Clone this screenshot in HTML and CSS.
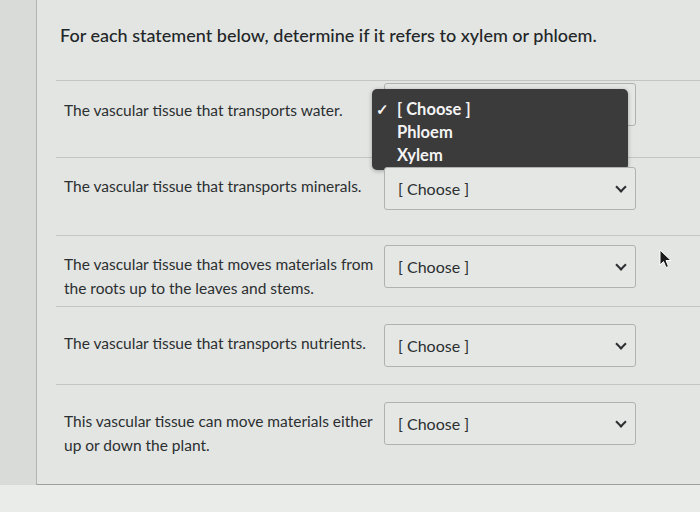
FILE: index.html
```html
<!DOCTYPE html>
<html lang="en">
<head>
    <meta charset="UTF-8">
    <meta name="viewport" content="width=device-width, initial-scale=1.0">
    <title>Quiz</title>
    <link rel="stylesheet" href="styles.css">
</head>
<body>
    <div class="page">
        <div class="card">
            <div class="title">For each statement below, determine if it refers to xylem or phloem.</div>

            <div class="questions">
                <div class="row">
                    <div class="statement">The vascular tissue that transports water.</div>
                    <div class="select-wrap open">
                        <div class="select"><span class="value">[ Choose ]</span><span class="chevron"></span></div>
                        <div class="menu">
                            <div class="option"><span class="check">&#10003;</span>[ Choose ]</div>
                            <div class="option">Phloem</div>
                            <div class="option">Xylem</div>
                        </div>
                    </div>
                </div>
                <div class="row">
                    <div class="statement">The vascular tissue that transports minerals.</div>
                    <div class="select-wrap">
                        <div class="select"><span class="value">[ Choose ]</span><span class="chevron"></span></div>
                    </div>
                </div>
                <div class="row short">
                    <div class="statement">The vascular tissue that moves materials from the roots up to the leaves and stems.</div>
                    <div class="select-wrap">
                        <div class="select"><span class="value">[ Choose ]</span><span class="chevron"></span></div>
                        <svg class="cursor" width="14" height="20" viewBox="0 0 14 20">
                            <path d="M1 1 L1 16 L4.5 12.5 L7 18.5 L9.5 17.5 L7 11.5 L12 11.5 Z" fill="#1a1a1a" stroke="#fff" stroke-width="1"/>
                        </svg>
                    </div>
                </div>
                <div class="row">
                    <div class="statement">The vascular tissue that transports nutrients.</div>
                    <div class="select-wrap">
                        <div class="select"><span class="value">[ Choose ]</span><span class="chevron"></span></div>
                    </div>
                </div>
                <div class="row">
                    <div class="statement">This vascular tissue can move materials either up or down the plant.</div>
                    <div class="select-wrap">
                        <div class="select"><span class="value">[ Choose ]</span><span class="chevron"></span></div>
                    </div>
                </div>
            </div>
        </div>
    </div>
</body>
</html>
```

FILE: styles.css
```css
body {
    margin: 0;
    padding: 0;
    font-family: Lato, "Open Sans", sans-serif;
    color: #2b2f31;
    background-color: #d9dbd8;
}

.page {
    height: 512px;
    overflow: hidden;
    background: linear-gradient(to bottom, #d9dbd8 0, #d9dbd8 485px, #eaecea 485px);
}

.card {
    margin-left: 36px;
    height: 484px;
    border-left: 1px solid #b3b5b2;
    border-bottom: 1px solid #9fa19e;
    background-color: #e3e5e2;
}

.title {
    padding: 24px 0 0 23px;
    height: 80px;
    box-sizing: border-box;
    font-size: 18px;
    font-weight: 500;
    color: #222628;
}

.questions {
    margin-left: 19px;
}

.row {
    display: flex;
    align-items: flex-start;
    height: 78px;
    box-sizing: border-box;
    padding: 9px 0 0 8px;
    border-top: 1px solid #c3c5c2;
}

.row:first-child {
    height: 77px;
    padding-top: 2px;
}

.row.short {
    height: 71px;
}

.row:nth-child(n+4) {
    padding-top: 17px;
}

.statement {
    width: 320px;
    box-sizing: border-box;
    padding: 7px 6px 0 0;
    font-size: 15.5px;
    line-height: 24px;
}

.row:first-child .statement {
    padding-top: 15px;
}

.select-wrap {
    position: relative;
}

.select {
    display: flex;
    align-items: center;
    justify-content: space-between;
    width: 252px;
    height: 43px;
    box-sizing: border-box;
    padding: 0 10px 0 13px;
    border: 1px solid #b0b2af;
    border-radius: 3px;
    background-color: #e5e7e4;
    font-size: 16px;
}

.open .value {
    visibility: hidden;
}

.chevron {
    width: 6px;
    height: 6px;
    border-right: 2px solid #2b2f31;
    border-bottom: 2px solid #2b2f31;
    transform: rotate(45deg);
    margin-top: -4px;
}

.menu {
    position: absolute;
    top: 6px;
    left: -12px;
    width: 256px;
    padding: 9px 0 3px;
    box-sizing: border-box;
    border-radius: 5px;
    background-color: #3b3b3c;
    color: #f4f4f4;
    font-size: 16.5px;
    font-weight: 700;
    box-shadow: 0 1px 4px rgba(0, 0, 0, 0.3);
}

.option {
    padding-left: 25px;
    line-height: 23px;
}

.check {
    display: inline-block;
    width: 21px;
    margin-left: -21px;
    font-size: 15px;
}

.cursor {
    position: absolute;
    left: 275px;
    top: 4px;
}
```
